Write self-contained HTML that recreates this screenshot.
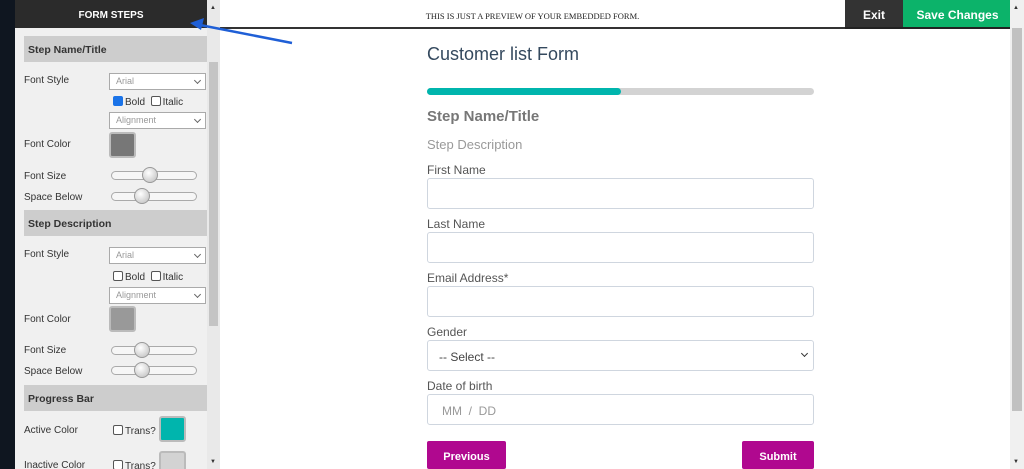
<!DOCTYPE html>
<html style="overflow:hidden;width:1024px;height:469px"><head><meta charset="utf-8"><style>
*{box-sizing:border-box;margin:0;padding:0}
body{width:1024px;height:469px;overflow:hidden;position:relative;background:#fff;font-family:"Liberation Sans",Arial,sans-serif}
.a{position:absolute}
.lbl{position:absolute;left:24px;font-size:10px;color:#333}
.sel{position:absolute;left:109px;width:97px;height:17px;border:1px solid #aaa;background:#fff;font-size:9px;color:#999;padding:2px 0 0 6px}
.sel:after{content:"";position:absolute;right:5px;top:4px;width:4px;height:4px;border-right:1.5px solid #666;border-bottom:1.5px solid #666;transform:rotate(45deg)}
.sec{position:absolute;left:24px;width:183px;height:26px;background:#cdcdcd;font-size:10.5px;font-weight:bold;color:#333;padding:8px 0 0 4px}
.cb{position:absolute;font-size:10px;color:#333}
.cb i{display:inline-block;width:10px;height:10px;border:1px solid #555;border-radius:2px;background:#fff;vertical-align:-1px;margin-right:2px}
.sw{position:absolute;width:27px;height:26px;border:2px solid #bbb;border-radius:3px}
.sl{position:absolute;left:111px;width:86px;height:9px;border:1px solid #aaa;border-radius:5px;background:#f6f6f6}
.sl b{position:absolute;top:-5px;width:16px;height:16px;border-radius:50%;background:radial-gradient(circle at 40% 35%,#fff,#bbb);border:1px solid #999}
.fl{position:absolute;left:427px;font-size:12px;color:#555}
.in{position:absolute;left:427px;width:387px;height:31px;border:1px solid #cfd6df;border-radius:3px;background:#fff}
</style></head><body>
<div class="a" style="left:0;top:0;width:15px;height:469px;background:#0f1620"></div>
<div class="a" style="left:15px;top:0;width:192px;height:469px;background:#f0f0f0"></div>
<div class="a" style="left:15px;top:0;width:192px;height:28px;background:#2b2b2b;color:#fff;font-size:10px;font-weight:bold;text-align:center;padding-top:10px">FORM STEPS</div>
<div class="a" style="left:207px;top:0;width:13px;height:469px;background:#e9e9e9"></div>
<div class="a" style="left:209px;top:62px;width:9px;height:264px;background:#c4c4c4"></div>
<div class="a" style="left:210px;top:5px;font-size:6px;color:#333">▲</div>
<div class="a" style="left:210px;top:459px;font-size:6px;color:#333">▼</div>

<div class="sec" style="top:36px">Step Name/Title</div>
<div class="lbl" style="top:75px">Font Style</div>
<div class="sel" style="top:73px">Arial</div>
<div class="cb" style="left:113px;top:96px"><i style="background:#1a73e8;border-color:#1a73e8"></i>Bold &nbsp;<i></i>Italic</div>
<div class="sel" style="top:112px">Alignment</div>
<div class="lbl" style="top:139px">Font Color</div>
<div class="sw" style="left:109px;top:132px;background:#777"></div>
<div class="lbl" style="top:171px">Font Size</div>
<div class="sl" style="top:171px"><b style="left:30px"></b></div>
<div class="lbl" style="top:192px">Space Below</div>
<div class="sl" style="top:192px"><b style="left:22px"></b></div>

<div class="sec" style="top:210px">Step Description</div>
<div class="lbl" style="top:249px">Font Style</div>
<div class="sel" style="top:247px">Arial</div>
<div class="cb" style="left:113px;top:271px"><i></i>Bold &nbsp;<i></i>Italic</div>
<div class="sel" style="top:287px">Alignment</div>
<div class="lbl" style="top:314px">Font Color</div>
<div class="sw" style="left:109px;top:306px;background:#999"></div>
<div class="lbl" style="top:345px">Font Size</div>
<div class="sl" style="top:346px"><b style="left:22px"></b></div>
<div class="lbl" style="top:366px">Space Below</div>
<div class="sl" style="top:366px"><b style="left:22px"></b></div>

<div class="sec" style="top:385px">Progress Bar</div>
<div class="lbl" style="top:425px">Active Color</div>
<div class="cb" style="left:113px;top:425px"><i></i>Trans?</div>
<div class="sw" style="left:159px;top:416px;background:#00b5ad"></div>
<div class="lbl" style="top:460px">Inactive Color</div>
<div class="cb" style="left:113px;top:460px"><i></i>Trans?</div>
<div class="sw" style="left:159px;top:451px;height:18px;border-bottom:none;border-radius:3px 3px 0 0;background:#d3d3d3"></div>

<div class="a" style="left:220px;top:0;width:625px;height:29px;border-bottom:2px solid #333;font-family:'Liberation Serif',serif;font-size:8.5px;color:#222;text-align:center;padding-top:11px">THIS IS JUST A PREVIEW OF YOUR EMBEDDED FORM.</div>
<div class="a" style="left:845px;top:0;width:58px;height:29px;background:#333;color:#fff;font-size:12px;font-weight:bold;text-align:center;padding-top:8px;border-bottom:2px solid #222">Exit</div>
<div class="a" style="left:903px;top:0;width:109px;height:29px;background:#0cb36a;color:#fff;font-size:12px;font-weight:bold;text-align:center;padding-top:8px;border-bottom:2px solid #222">Save Changes</div>
<div class="a" style="left:1010px;top:0;width:14px;height:469px;background:#f0f0f0"></div>
<div class="a" style="left:1012px;top:28px;width:10px;height:383px;background:#c1c1c1"></div>
<div class="a" style="left:1013px;top:5px;font-size:6px;color:#333">▲</div>
<div class="a" style="left:1013px;top:459px;font-size:6px;color:#333">▼</div>

<div class="a" style="left:427px;top:44px;font-size:18px;color:#34495e">Customer list Form</div>
<div class="a" style="left:427px;top:88px;width:387px;height:7px;border-radius:4px;background:#d3d3d3"></div>
<div class="a" style="left:427px;top:88px;width:194px;height:7px;border-radius:4px;background:#00b5ad"></div>
<div class="a" style="left:427px;top:108px;font-size:15px;font-weight:bold;color:#777">Step Name/Title</div>
<div class="a" style="left:427px;top:137px;font-size:13px;color:#999">Step Description</div>
<div class="fl" style="top:163px">First Name</div>
<div class="in" style="top:178px"></div>
<div class="fl" style="top:217px">Last Name</div>
<div class="in" style="top:232px"></div>
<div class="fl" style="top:271px">Email Address*</div>
<div class="in" style="top:286px"></div>
<div class="fl" style="top:325px">Gender</div>
<div class="in" style="top:340px;font-size:12px;color:#444;padding:9px 0 0 11px">-- Select --<span style="position:absolute;right:6px;top:10px;width:5px;height:5px;border-right:1.5px solid #333;border-bottom:1.5px solid #333;transform:rotate(45deg)"></span></div>
<div class="fl" style="top:379px">Date of birth</div>
<div class="in" style="top:394px;font-size:12px;color:#999;padding:9px 0 0 14px">MM &nbsp;/ &nbsp;DD</div>
<div class="a" style="left:427px;top:441px;width:79px;height:28px;background:#b0088f;border-radius:2px;color:#fff;font-size:11px;font-weight:bold;text-align:center;padding-top:10px">Previous</div>
<div class="a" style="left:742px;top:441px;width:72px;height:28px;background:#b0088f;border-radius:2px;color:#fff;font-size:11px;font-weight:bold;text-align:center;padding-top:10px">Submit</div>

<svg class="a" style="left:180px;top:10px" width="115" height="40"><line x1="112" y1="33" x2="20" y2="15" stroke="#1f5fd6" stroke-width="2.5"/><path d="M10 13 L24 8 L21 20 Z" fill="#1f5fd6"/></svg>
</body></html>
